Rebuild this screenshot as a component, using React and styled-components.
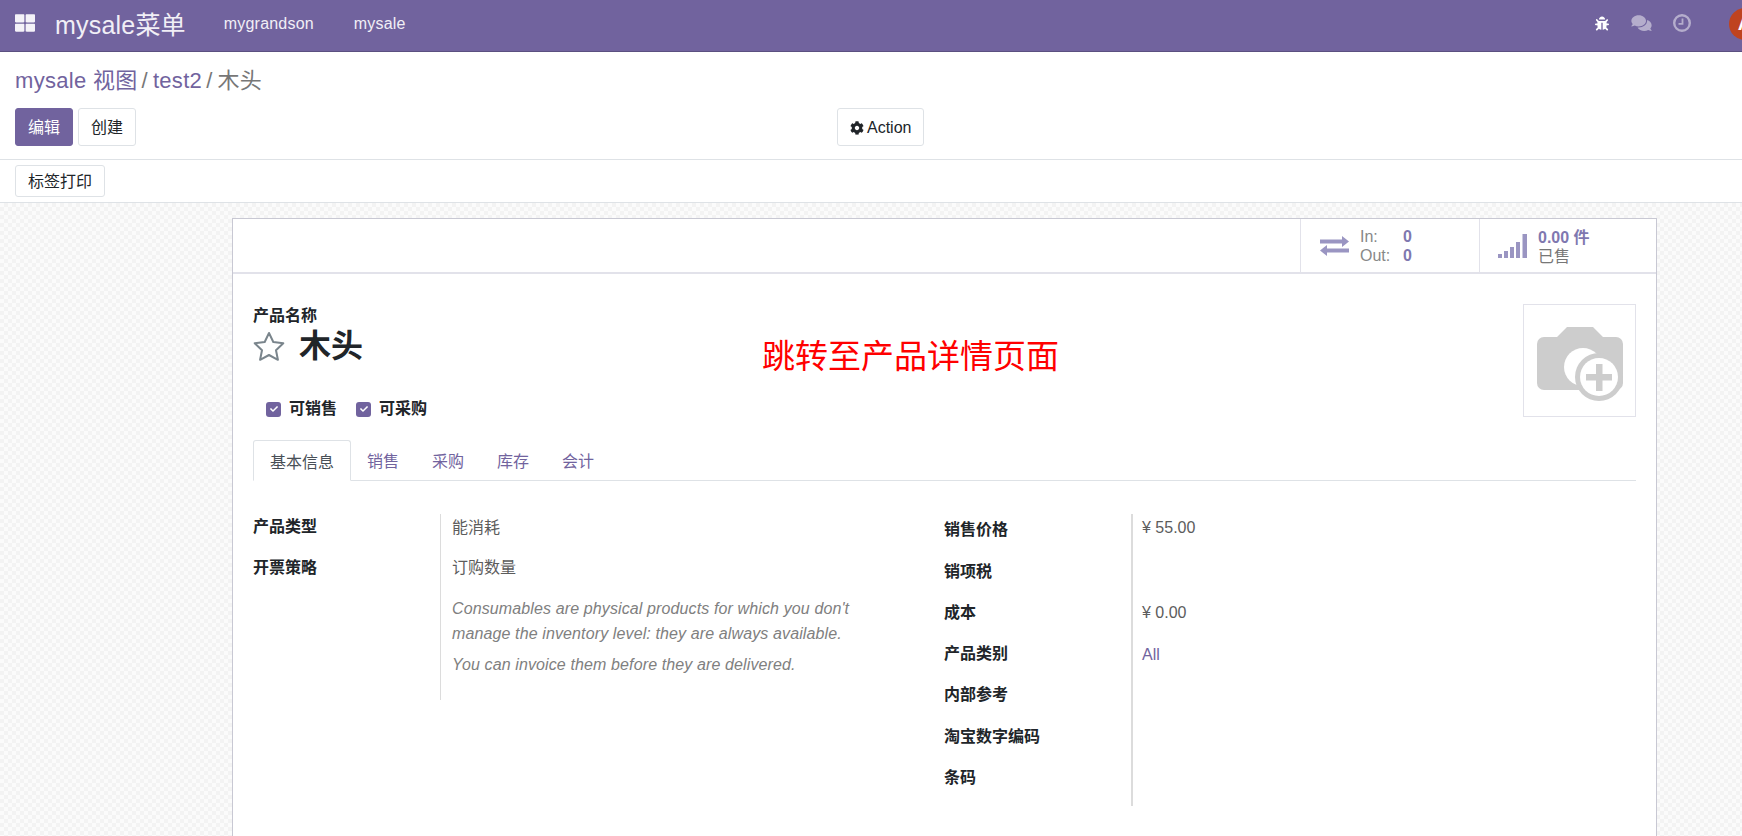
import React from "react";
import styled, { createGlobalStyle } from "styled-components";
import { FaThLarge, FaBug, FaComments, FaCog, FaCheck } from "react-icons/fa";

const Global = createGlobalStyle`
  html, body { margin: 0; padding: 0; height: 836px; overflow: hidden; background: #fff; }
  * { box-sizing: border-box; }
  body { font-family: "Liberation Sans", "Noto Sans CJK SC", sans-serif; font-size: 16px; color: #4c4c4c; }
`;

const Page = styled.div`display: flex; flex-direction: column; width: 1742px; height: 836px; overflow: hidden;`;

const Navbar = styled.header`
  flex: 0 0 52px; display: flex; align-items: center; padding: 0 0 4px 15px; color: #fff;
  background: #71639e; border-bottom: 1px solid #5b5080; overflow: hidden;
`;
const AppsIcon = styled(FaThLarge)`width: 20px; height: 20px; color: #f4f2f8; margin-top: -2px;`;
const Brand = styled.span`font-size: 25px; letter-spacing: .2px; margin: -1px 38px 0 20px; color: #f1eff6; white-space: nowrap;`;
const MenuItem = styled.span`font-size: 16px; letter-spacing: .2px; margin-right: 40px; color: #f1eff6;`;
const Systray = styled.div`margin-left: auto; display: flex; align-items: center; margin-top: -1px;`;
const TrayIcon = styled.span`
  display: flex; width: ${p => p.$w}px; margin-right: ${p => p.$gap}px;
  color: ${p => (p.$bright ? "#fff" : "rgba(255,255,255,.48)")};
  svg { width: ${p => p.$w}px; height: ${p => p.$h}px; }
`;
const Avatar = styled.span`
  flex: none; width: 32px; height: 32px; border-radius: 50%; background: #bf431f; color: #fff; margin-right: -19px;
  margin-top: 1px; display: flex; align-items: center; justify-content: center; font-size: 20px; font-weight: 700;
`;

const ControlPanel = styled.section`padding: 0 15px; height: 108px; border-bottom: 1px solid #dee2e6; background: #fff;`;
const Breadcrumbs = styled.ol`
  list-style: none; margin: 0; padding: 16px 0 0; height: 56px; display: flex; font-size: 22px; letter-spacing: .3px; line-height: 26px;
`;
const Crumb = styled.li`
  color: ${p => (p.$active ? "#777" : "#71639e")}; white-space: pre;
`;
const Slash = styled.span`color: #777; margin: 0 5px 0 4px;`;
const ButtonRow = styled.div`display: flex; align-items: flex-start;`;
const LeftButtons = styled.div`display: flex; gap: 5px; width: 822px;`;
const Button = styled.button`
  font: inherit; font-size: 16px; line-height: 20px; height: ${p => p.$h || 38}px; padding: 1px 12px 0; border-radius: 3px;
  display: inline-flex; align-items: center; gap: 3px; white-space: nowrap;
  border: 1px solid ${p => (p.$primary ? "#71639e" : "#dee2e6")};
  background: ${p => (p.$primary ? "#71639e" : "#fff")};
  color: ${p => (p.$primary ? "#fff" : "#212529")};
  svg { width: 14px; height: 14px; }
`;
const StatusBar = styled.div`
  height: 43px; padding: 5px 15px 0; border-bottom: 1px solid #dee2e6; background: #fff;
`;
const Background = styled.main`
  flex: 1; min-height: 0; padding: 15px 0 0 232px; background-color: #f8f8f8;
  background-image: repeating-conic-gradient(#f3f3f3 0 25%, #fbfbfb 0 50%);
  background-size: 8px 8px;
`;
const Sheet = styled.article`
  position: relative; width: 1425px; height: 800px; background: #fff; border: 1px solid #c8c8d3;
`;
const Stats = styled.div`display: flex; justify-content: flex-end; height: 55px; border-bottom: 2px solid #e2e2ea;`;
const StatButton = styled.div`
  width: ${p => p.$w}px; display: flex; align-items: center; padding-left: ${p => p.$pad}px;
  border-left: 1px solid #e2e2ea;
`;
const StatIcon = styled.svg`flex: none; fill: #9a95c2; margin-right: ${p => p.$gap}px;`;
const StatTable = styled.div`
  display: grid; grid-template-columns: 43px auto; line-height: 19px; margin-top: 1px; color: #888;
`;
const StatValue = styled.b`color: #7f78b0; font-weight: 700;`;
const StatLines = styled.div`display: flex; flex-direction: column; line-height: 19px; margin-top: 3px; color: #777;`;

const SheetBody = styled.div`padding: 30px 20px 0;`;
const Header = styled.div`display: flex; height: 136px;`;
const TitleColumn = styled.div`flex: 1; min-width: 0;`;
const NameLabel = styled.label`display: block; font-weight: 700; line-height: 24px; color: #212529;`;
const Title = styled.h1`
  margin: -2px 0 0; display: flex; align-items: center; font-size: 32px; line-height: 40px; font-weight: 700; color: #212529;
`;
const StarSvg = styled.svg`flex: none; margin-right: 14px; fill: none; stroke: #7a858c; stroke-width: 2; stroke-linejoin: round;`;
const Checks = styled.div`display: flex; gap: 19px; margin: 30px 0 0 13px;`;
const Check = styled.label`
  display: flex; align-items: center; gap: 8px; font-weight: 700; line-height: 26px; color: #212529;
`;
const CheckBox = styled.span`
  width: 15px; height: 15px; border-radius: 3px; background: #71639e; color: #fff;
  display: flex; align-items: center; justify-content: center;
  svg { width: 8px; height: 8px; }
`;
const ImageBox = styled.div`
  flex: none; width: 113px; height: 113px; border: 1px solid #e2e2ea; display: flex; align-items: center; justify-content: center;
`;
const Tabs = styled.div`display: flex; height: 41px; border-bottom: 1px solid #dee2e6;`;
const Tab = styled.div`
  height: ${p => (p.$active ? "41px" : "40px")}; padding: 10px 16px 0; margin-right: ${p => (p.$active ? 0 : 1)}px;
  line-height: 24px; border-radius: 3px 3px 0 0;
  color: ${p => (p.$active ? "#495057" : "#71639e")};
  background: ${p => (p.$active ? "#fff" : "transparent")};
  border: ${p => (p.$active ? "1px solid #dee2e6" : "0")};
  border-bottom: ${p => (p.$active ? "1px solid #fff" : "0")};
`;
const Groups = styled.div`display: flex; padding-top: 33px;`;
const Group = styled.div`flex: none; width: ${p => p.$w}px;`;
const Row = styled.div`
  display: grid; grid-template-columns: ${p => p.$label}px 1fr; height: ${p => (p.$h ? `${p.$h}px` : "auto")};
`;
const Label = styled.label`
  font-weight: 700; line-height: 26px; color: #212529; padding-top: ${p => p.$top || 0}px;
`;
const Value = styled.div`
  border-left: ${p => p.$line || 1}px solid #dcdcdc; padding-left: ${p => p.$pad || 11}px; padding-top: ${p => p.$top || 0}px;
  line-height: 26px; color: ${p => (p.$link ? "#71639e" : "#5c5c5c")};
`;
const Help = styled.p`
  margin: ${p => p.$mt}px 0 0; font-style: italic; letter-spacing: .12px; line-height: 25px; color: #808080; white-space: nowrap;
`;
const HelpEnd = styled.div`height: 23px;`;
const Annotation = styled.div`
  position: absolute; left: 529px; top: 115px; font-size: 33px; line-height: 46px; color: #ff0000; white-space: nowrap;
`;

const leftRows = [["产品类型", "能消耗", 40, 0], ["开票策略", "订购数量", undefined, 1]];
const rightRows = [
  ["销售价格", "¥ 55.00", 41, 1, false, 3],
  ["销项税", "", 41, 0, false, 4],
  ["成本", "¥ 0.00", 41, 4, false, 4],
  ["产品类别", "All", 41, 5, true, 4],
  ["内部参考", "", 41, 0, false, 4],
  ["淘宝数字编码", "", 41, 0, false, 5],
  ["条码", "", 46, 0, false, 5],
];

const ExchangeIcon = () => (
  <StatIcon $gap={11} width="29" height="20" viewBox="0 0 29 20">
    <path d="M0 3.5h22V0l7 5.5-7 5.500V7.500H0z" />
    <path d="M29 12.500H7V9l-7 5.500L7 20v-3.500h22z" />
  </StatIcon>
);
const SignalIcon = () => (
  <StatIcon $gap={11} width="29" height="24" viewBox="0 0 29 24">
    <rect x="0" y="20" width="4" height="4" />
    <rect x="6" y="17" width="4" height="7" />
    <rect x="12" y="13" width="4" height="11" />
    <rect x="18" y="8" width="4" height="16" />
    <rect x="24.500" y="0" width="4.500" height="24" />
  </StatIcon>
);
const CameraPlus = () => (
  <svg width="100" height="100" viewBox="0 0 100 100">
    <path fill="#cdcdcd" d="M14 26h13l10-10h26l10 10h13a7 7 0 0 1 7 7v39a7 7 0 0 1-7 7H14a7 7 0 0 1-7-7V33a7 7 0 0 1 7-7z" />
    <circle cx="53" cy="56" r="19" fill="#fff" />
    <circle cx="69" cy="66" r="24" fill="#cdcdcd" />
    <circle cx="69" cy="66" r="19" fill="#fff" />
    <path fill="#cdcdcd" d="M66 53h6.500v10H82v6.500h-9.500V80H66V69.500H56V63h10z" />
  </svg>
);
const StarIcon = () => (
  <StarSvg width="32" height="30" viewBox="0 0 32 30">
    <polygon points="16,2 20.300,11 30.300,12.300 23,19.200 24.900,28.800 16,24 7.100,28.800 9,19.200 1.700,12.300 11.700,11" />
  </StarSvg>
);
const ClockIcon = () => (
  <svg viewBox="0 0 18 18" fill="none" stroke="currentColor">
    <circle cx="9" cy="9" r="7.800" strokeWidth="2.400" />
    <path d="M9.500 4.500V9.800H5.500" strokeWidth="1.800" />
  </svg>
);

export default function App() {
  return (
    <Page>
      <Global />
      <Navbar>
        <AppsIcon />
        <Brand>mysale菜单</Brand>
        <MenuItem>mygrandson</MenuItem>
        <MenuItem>mysale</MenuItem>
        <Systray>
          <TrayIcon $bright $w={14} $h={15} $gap={22}><FaBug /></TrayIcon>
          <TrayIcon $w={21} $h={18} $gap={21}><FaComments /></TrayIcon>
          <TrayIcon $w={18} $h={18} $gap={38}><ClockIcon /></TrayIcon>
          <Avatar>A</Avatar>
        </Systray>
      </Navbar>

      <ControlPanel>
        <Breadcrumbs>
          <Crumb>mysale 视图</Crumb>
          <Slash>/</Slash>
          <Crumb>test2</Crumb>
          <Slash>/</Slash>
          <Crumb $active>木头</Crumb>
        </Breadcrumbs>
        <ButtonRow>
          <LeftButtons>
            <Button $primary>编辑</Button>
            <Button>创建</Button>
          </LeftButtons>
          <Button><FaCog />Action</Button>
        </ButtonRow>
      </ControlPanel>

      <StatusBar>
        <Button $h={32}>标签打印</Button>
      </StatusBar>

      <Background>
        <Sheet>
          <Stats>
            <StatButton $w={179} $pad={19}>
              <ExchangeIcon />
              <StatTable>
                <span>In:</span><StatValue>0</StatValue>
                <span>Out:</span><StatValue>0</StatValue>
              </StatTable>
            </StatButton>
            <StatButton $w={177} $pad={18}>
              <SignalIcon />
              <StatLines>
                <StatValue>0.00 件</StatValue>
                <span>已售</span>
              </StatLines>
            </StatButton>
          </Stats>
          <SheetBody>
            <Header>
              <TitleColumn>
                <NameLabel>产品名称</NameLabel>
                <Title><StarIcon />木头</Title>
                <Checks>
                  <Check><CheckBox><FaCheck /></CheckBox>可销售</Check>
                  <Check><CheckBox><FaCheck /></CheckBox>可采购</Check>
                </Checks>
              </TitleColumn>
              <ImageBox><CameraPlus /></ImageBox>
            </Header>
            <Tabs>
              <Tab $active>基本信息</Tab>
              <Tab>销售</Tab>
              <Tab>采购</Tab>
              <Tab>库存</Tab>
              <Tab>会计</Tab>
            </Tabs>
            <Groups>
              <Group $w={691}>
                {leftRows.map(([label, value, h, labelTop], i) => (
                  <Row key={label} $label={187} $h={h}>
                    <Label $top={labelTop}>{label}</Label>
                    <Value $top={1}>
                      {value}
                      {i === 1 && (
                        <>
                          <Help $mt={15}>Consumables are physical products for which you don't<br />manage the inventory level: they are always available.</Help>
                          <Help $mt={6}>You can invoice them before they are delivered.</Help>
                          <HelpEnd />
                        </>
                      )}
                    </Value>
                  </Row>
                ))}
              </Group>
              <Group $w={500}>
                {rightRows.map(([label, value, h, top, link, labelTop]) => (
                  <Row key={label} $label={187} $h={h}>
                    <Label $top={labelTop}>{label}</Label>
                    <Value $line={2} $pad={9} $top={top} $link={link}>{value}</Value>
                  </Row>
                ))}
              </Group>
            </Groups>
          </SheetBody>
          <Annotation>跳转至产品详情页面</Annotation>
        </Sheet>
      </Background>
    </Page>
  );
}
